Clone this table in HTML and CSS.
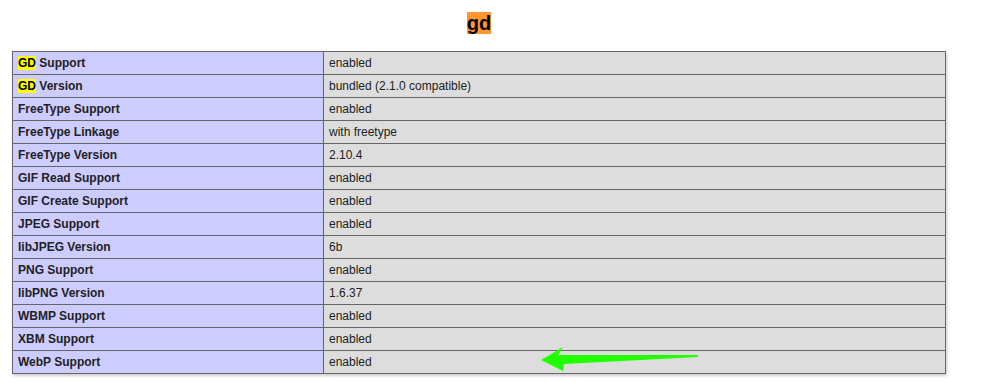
FILE: index.html
```html
<!DOCTYPE html>
<html>
<head>
<meta charset="utf-8">
<link rel="stylesheet" href="styles.css">
</head>
<body>
<div class="page">
  <h2 class="title"><span class="hl-current">gd</span></h2>
  <table class="info">
    <tr><td class="e"><span class="hl">GD</span> Support</td><td class="v">enabled</td></tr>
    <tr><td class="e"><span class="hl">GD</span> Version</td><td class="v">bundled (2.1.0 compatible)</td></tr>
    <tr><td class="e">FreeType Support</td><td class="v">enabled</td></tr>
    <tr><td class="e">FreeType Linkage</td><td class="v">with freetype</td></tr>
    <tr><td class="e">FreeType Version</td><td class="v">2.10.4</td></tr>
    <tr><td class="e">GIF Read Support</td><td class="v">enabled</td></tr>
    <tr><td class="e">GIF Create Support</td><td class="v">enabled</td></tr>
    <tr><td class="e">JPEG Support</td><td class="v">enabled</td></tr>
    <tr><td class="e">libJPEG Version</td><td class="v">6b</td></tr>
    <tr><td class="e">PNG Support</td><td class="v">enabled</td></tr>
    <tr><td class="e">libPNG Version</td><td class="v">1.6.37</td></tr>
    <tr><td class="e">WBMP Support</td><td class="v">enabled</td></tr>
    <tr><td class="e">XBM Support</td><td class="v">enabled</td></tr>
    <tr><td class="e">WebP Support</td><td class="v">enabled</td></tr>
  </table>
  <svg class="arrow" width="983" height="383" viewBox="0 0 983 383">
    <polygon points="541,360 563,347 558,355 698,355 698,357 564,364 563,371" fill="#22ff00"/>
  </svg>
</div>
</body>
</html>
```
FILE: styles.css
```css
html, body {
  margin: 0;
  padding: 0;
  background: #fff;
}
body {
  color: #222;
  font-family: "Liberation Sans", Arial, sans-serif;
}
.page {
  position: relative;
  width: 958px;
  height: 371px;
  padding-top: 12px;
}
.title {
  margin: 0 0 16px;
  font-size: 20px;
  line-height: 23px;
  font-weight: bold;
  text-align: center;
  color: #000;
}
.hl-current {
  background: #ff9632;
}
.hl {
  background: #ffff00;
  color: #000;
}
.info {
  border-collapse: collapse;
  width: 934px;
  margin: 0 auto;
  box-shadow: 1px 2px 3px #ccc;
  text-align: left;
}
.info td {
  border: 1px solid #666;
  font-size: 12px;
  line-height: 14px;
  padding: 4px 5px;
  vertical-align: baseline;
}
.e {
  background: #ccf;
  width: 300px;
  font-weight: bold;
}
.v {
  background: #ddd;
}
.arrow {
  position: absolute;
  left: 0;
  top: 0;
}
```
